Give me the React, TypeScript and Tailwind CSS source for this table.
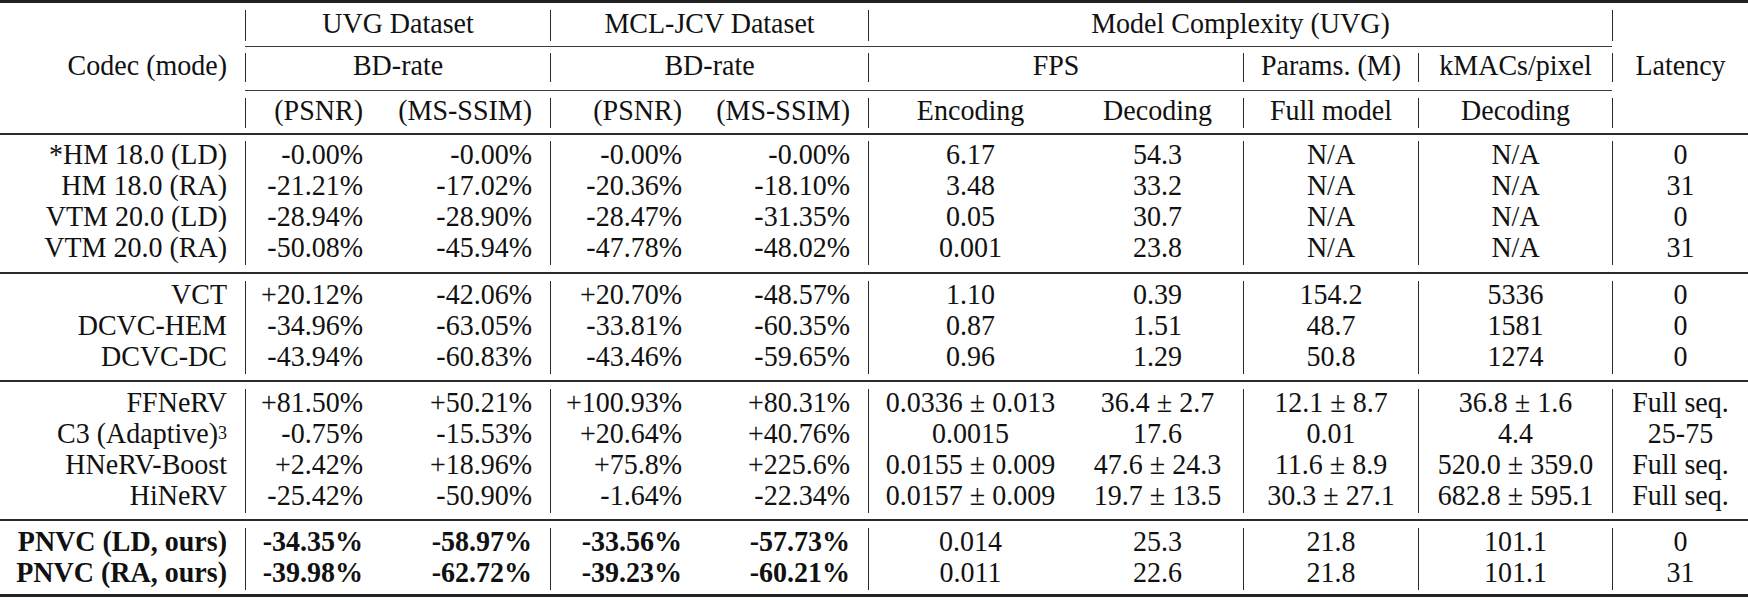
import React from 'react';

const GRID =
  'grid grid-cols-[245px_136px_169px_150px_168px_204px_171px_175px_194px_136px]';

type Align = 'r' | 'c';

interface CellProps {
  children?: React.ReactNode;
  bar?: boolean;
  align?: Align;
  span?: 1 | 2 | 4;
  bold?: boolean;
}

const spanClass = { 1: '', 2: 'col-span-2', 4: 'col-span-4' };

function Cell({ children, bar = false, align = 'c', span = 1, bold = false }: CellProps) {
  return (
    <div
      className={[
        'flex items-center whitespace-nowrap',
        spanClass[span],
        bar ? 'border-l border-[#2a2a2a]' : '',
        align === 'r' ? 'justify-end pr-[18px]' : 'justify-center',
        bold ? 'font-bold' : '',
      ].join(' ')}
    >
      {children !== undefined && (
        <span className="inline-block -translate-y-[3px] scale-y-[1.08]">{children}</span>
      )}
    </div>
  );
}

function Gap({ h }: { h: string }) {
  return <div className={h} />;
}

type DataRow = {
  name: React.ReactNode;
  v: string[];
  bold?: boolean;
};

const groups: DataRow[][] = [
  [
    { name: '*HM 18.0 (LD)', v: ['-0.00%', '-0.00%', '-0.00%', '-0.00%', '6.17', '54.3', 'N/A', 'N/A', '0'] },
    { name: 'HM 18.0 (RA)', v: ['-21.21%', '-17.02%', '-20.36%', '-18.10%', '3.48', '33.2', 'N/A', 'N/A', '31'] },
    { name: 'VTM 20.0 (LD)', v: ['-28.94%', '-28.90%', '-28.47%', '-31.35%', '0.05', '30.7', 'N/A', 'N/A', '0'] },
    { name: 'VTM 20.0 (RA)', v: ['-50.08%', '-45.94%', '-47.78%', '-48.02%', '0.001', '23.8', 'N/A', 'N/A', '31'] },
  ],
  [
    { name: 'VCT', v: ['+20.12%', '-42.06%', '+20.70%', '-48.57%', '1.10', '0.39', '154.2', '5336', '0'] },
    { name: 'DCVC-HEM', v: ['-34.96%', '-63.05%', '-33.81%', '-60.35%', '0.87', '1.51', '48.7', '1581', '0'] },
    { name: 'DCVC-DC', v: ['-43.94%', '-60.83%', '-43.46%', '-59.65%', '0.96', '1.29', '50.8', '1274', '0'] },
  ],
  [
    { name: 'FFNeRV', v: ['+81.50%', '+50.21%', '+100.93%', '+80.31%', '0.0336 ± 0.013', '36.4 ± 2.7', '12.1 ± 8.7', '36.8 ± 1.6', 'Full seq.'] },
    {
      name: (
        <>
          C3 (Adaptive)<sup className="text-[18px] leading-none relative -top-[3px]">3</sup>
        </>
      ),
      v: ['-0.75%', '-15.53%', '+20.64%', '+40.76%', '0.0015', '17.6', '0.01', '4.4', '25-75'],
    },
    { name: 'HNeRV-Boost', v: ['+2.42%', '+18.96%', '+75.8%', '+225.6%', '0.0155 ± 0.009', '47.6 ± 24.3', '11.6 ± 8.9', '520.0 ± 359.0', 'Full seq.'] },
    { name: 'HiNeRV', v: ['-25.42%', '-50.90%', '-1.64%', '-22.34%', '0.0157 ± 0.009', '19.7 ± 13.5', '30.3 ± 27.1', '682.8 ± 595.1', 'Full seq.'] },
  ],
  [
    { name: 'PNVC (LD, ours)', v: ['-34.35%', '-58.97%', '-33.56%', '-57.73%', '0.014', '25.3', '21.8', '101.1', '0'], bold: true },
    { name: 'PNVC (RA, ours)', v: ['-39.98%', '-62.72%', '-39.23%', '-60.21%', '0.011', '22.6', '21.8', '101.1', '31'], bold: true },
  ],
];

function Row({ r }: { r: DataRow }) {
  const [a, b, c, d, e, f, g, h, i] = r.v;
  return (
    <div className={`${GRID} h-[31px]`}>
      <Cell align="r" bold={r.bold}>{r.name}</Cell>
      <Cell align="r" bar bold={r.bold}>{a}</Cell>
      <Cell align="r" bold={r.bold}>{b}</Cell>
      <Cell align="r" bar bold={r.bold}>{c}</Cell>
      <Cell align="r" bold={r.bold}>{d}</Cell>
      <Cell bar>{e}</Cell>
      <Cell>{f}</Cell>
      <Cell bar>{g}</Cell>
      <Cell bar>{h}</Cell>
      <Cell bar>{i}</Cell>
    </div>
  );
}

function CLine() {
  return (
    <div className={GRID}>
      <div className="col-start-2 col-span-8 h-[1.2px] bg-[#3a3a3a]" />
    </div>
  );
}

export default function App() {
  return (
    <div className="w-[1748px] h-[600px] bg-white text-[#111] font-[family-name:'Liberation_Serif','Times_New_Roman',serif] text-[28px] leading-none">
      <div className="h-[2.5px] bg-[#222]" />
      <Gap h="h-[7.5px]" />

      {/* header row 1 */}
      <div className={`${GRID} h-[31px]`}>
        <Cell />
        <Cell bar span={2}>UVG Dataset</Cell>
        <Cell bar span={2}>MCL-JCV Dataset</Cell>
        <Cell bar span={4}>Model Complexity (UVG)</Cell>
        <Cell bar />
      </div>
      <Gap h="h-[5px]" />
      <CLine />
      <Gap h="h-[6px]" />

      {/* header row 2 */}
      <div className={`${GRID} h-[29px]`}>
        <Cell align="r">Codec (mode)</Cell>
        <Cell bar span={2}>BD-rate</Cell>
        <Cell bar span={2}>BD-rate</Cell>
        <Cell bar span={2}>FPS</Cell>
        <Cell bar>Params. (M)</Cell>
        <Cell bar>kMACs/pixel</Cell>
        <Cell bar>Latency</Cell>
      </div>
      <Gap h="h-[8px]" />
      <CLine />
      <Gap h="h-[7px]" />

      {/* header row 3 */}
      <div className={`${GRID} h-[30px]`}>
        <Cell />
        <Cell align="r" bar>(PSNR)</Cell>
        <Cell align="r">(MS-SSIM)</Cell>
        <Cell align="r" bar>(PSNR)</Cell>
        <Cell align="r">(MS-SSIM)</Cell>
        <Cell bar>Encoding</Cell>
        <Cell>Decoding</Cell>
        <Cell bar>Full model</Cell>
        <Cell bar>Decoding</Cell>
        <Cell bar />
      </div>
      <Gap h="h-[5px]" />
      <div className="h-[2px] bg-[#2a2a2a]" />

      {groups.map((g, gi) => (
        <React.Fragment key={gi}>
          <Gap h={gi === 0 ? 'h-[6px]' : 'h-[7.4px]'} />
          {g.map((r, ri) => (
            <Row key={ri} r={r} />
          ))}
          <Gap h={gi === 0 ? 'h-[7px]' : gi === 3 ? 'h-[4px]' : 'h-[6px]'} />
          {gi < 3 ? (
            <div className="h-[1.6px] bg-[#2a2a2a]" />
          ) : (
            <div className="h-[2.5px] bg-[#222]" />
          )}
        </React.Fragment>
      ))}
    </div>
  );
}
